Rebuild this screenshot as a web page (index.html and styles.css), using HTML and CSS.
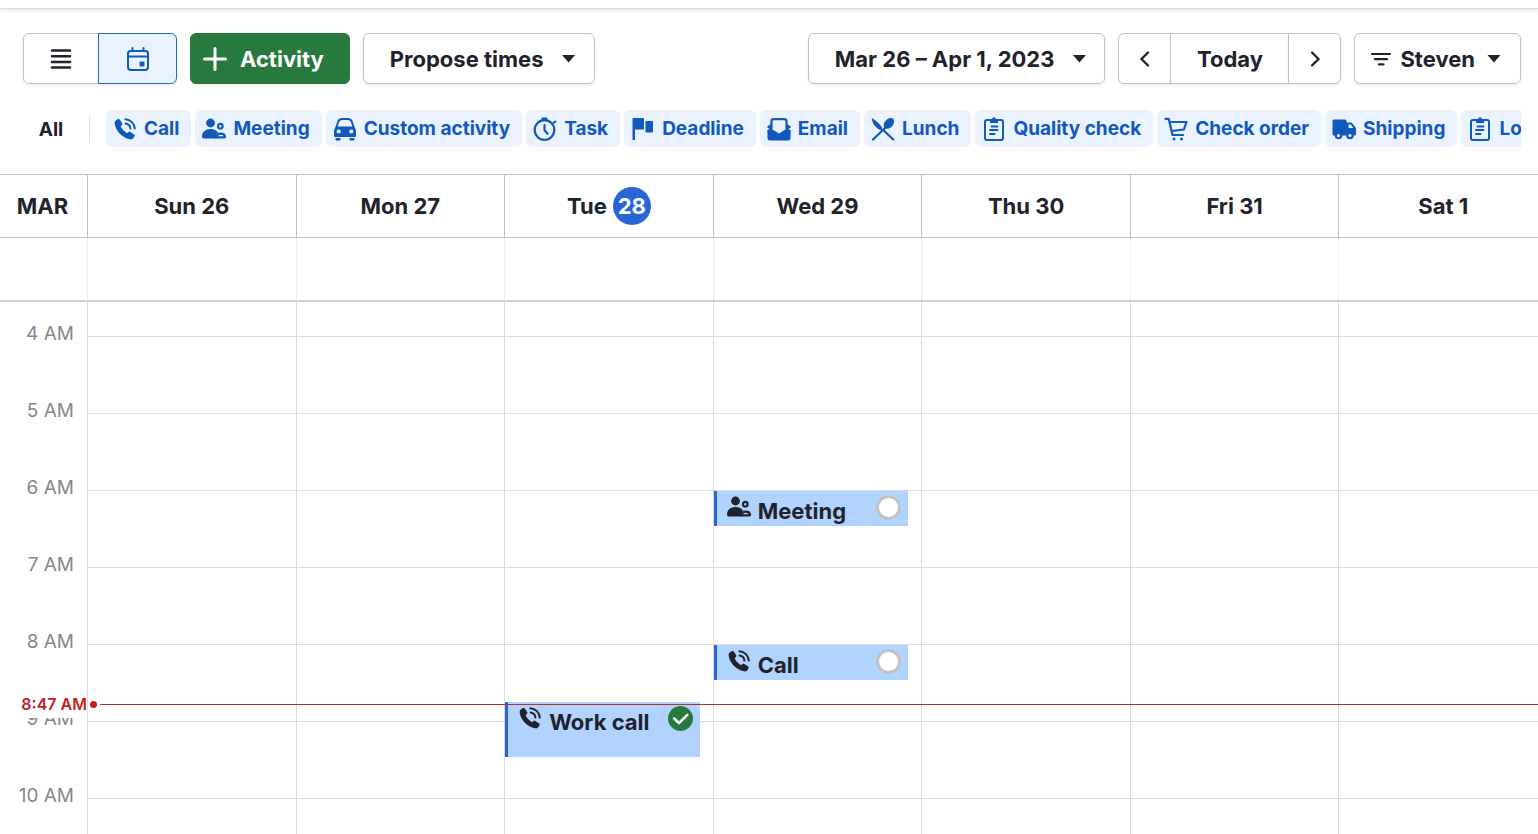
FILE: index.html
```html
<!DOCTYPE html>
<html lang="en">
<head>
<meta charset="utf-8">
<title>Activities</title>
<link rel="stylesheet" href="styles.css">
</head>
<body>
<svg class="sprite" aria-hidden="true">
  <symbol id="phone" viewBox="0 0 24 24">
    <path fill="currentColor" d="M3.4 3 5 2.1Q6.1 1.6 6.8 2.6L9.2 6.3Q9.7 7.3 8.9 8.1L7.6 9.4Q9.5 13.4 13.9 16.2L15.6 14.9Q16.5 14.3 17.4 14.9L21.2 17.4Q22 18 21.6 18.9L20.5 21Q19.4 22.7 17.3 22.3 10.5 21 5.9 15.7 1.9 11 1.6 6.1 1.6 4.1 3.4 3Z"/>
    <path fill="none" stroke="currentColor" stroke-width="2" stroke-linecap="round" d="M12.4 2.2a10 10 0 0 1 9.4 9.4M12.6 6.6a5.6 5.6 0 0 1 4.8 5"/>
  </symbol>
  <symbol id="people" viewBox="0 0 24 24">
    <circle cx="8.5" cy="6" r="4.4" fill="currentColor"/>
    <path fill="currentColor" d="M0 19.5C0 14.8 3.6 12 8.5 12c3.6 0 6.2 1.3 7.5 3.600-1.300 1.200-2 2.900-1.700 5.900H1.400Q0 21.500 0 19.500Z"/>
    <circle cx="18.300" cy="9.200" r="2.300" fill="none" stroke="currentColor" stroke-width="2.200"/>
    <path fill="none" stroke="currentColor" stroke-width="2.200" d="M13 20.400h9.400q.7 0 .6-.8c-.3-2-2-3-4.300-3-2.400 0-4 1.300-4.400 3.800"/>
  </symbol>
  <symbol id="car" viewBox="0 0 24 24">
    <path fill="none" stroke="currentColor" stroke-width="2" d="M3.200 11 5 5.200Q5.800 2.400 8.600 2.100q3.400-.3 6.800 0 2.800.3 3.600 3.100L20.800 11"/>
    <path fill="currentColor" fill-rule="evenodd" d="M4 9.500h16q3 1.500 3 4.700V19q0 1-1 1H2q-1 0-1-1v-4.800Q1 11 4 9.500ZM5.700 12.400a2.100 2.100 0 1 0 0 4.200 2.100 2.100 0 0 0 0-4.200ZM18.300 12.400a2.100 2.100 0 1 0 0 4.200 2.100 2.100 0 0 0 0-4.200ZM2.500 21h5v1.500q0 1-1 1h-3q-1 0-1-1ZM16.500 21h5v1.500q0 1-1 1h-3q-1 0-1-1Z"/>
  </symbol>
  <symbol id="timer" viewBox="0 0 24 24">
    <circle cx="11.500" cy="13" r="9.800" fill="none" stroke="currentColor" stroke-width="2.200"/>
    <path fill="none" stroke="currentColor" stroke-width="2.200" stroke-linecap="round" d="M11.500 8.200V13l3 3.800M20.800 5.600l1.500-1"/>
    <path fill="currentColor" d="M8.800.5h5.400l.6 3.500H8.200Z"/>
  </symbol>
  <symbol id="flag" viewBox="0 0 24 24">
    <path fill="currentColor" d="M1.500 2q0-1 1-1H12q1 0 1 1v10.500H4V23H1.500ZM14.500 4H21q1 0 1 1v9.500q0 1-1 1h-5.500q-1 0-1-1Z"/>
  </symbol>
  <symbol id="mail" viewBox="0 0 24 24">
    <path fill="none" stroke="currentColor" stroke-width="2.200" d="M4.500 12V4.200q0-2 2-2h11q2 0 2 2V12"/>
    <path fill="currentColor" d="M4.500 6.500.6 9.300q-.9.800 0 1.500l3.900 2.200ZM19.500 6.500l3.900 2.800q.9.800 0 1.500l-3.900 2.200ZM.5 13.400 12 18.700l11.500-5.300V21q0 2.500-2.500 2.500H3Q.5 23.500.5 21Z"/>
    <path fill="currentColor" d="M.5 13 4 11.500l8 5 8-5 3.500 1.500v2L12 20 .5 15Z"/>
  </symbol>
  <symbol id="lunch" viewBox="0 0 24 24">
    <path fill="none" stroke="currentColor" stroke-width="2.200" stroke-linecap="round" d="M2 22.500 15 10M22.200 22.500 13.300 14"/>
    <path fill="currentColor" d="M.8 1q3.500 2 8 6.500 2.800 2.600 2.700 5.700-2.300.4-5-1.700Q1 7 .8 1ZM13.300 11.500Q11.600 6.500 15 3.200q3.800-3.400 7.300-1.500 2 3.600-1.100 7.500-3.100 3.600-7.900 2.300Z"/>
  </symbol>
  <symbol id="clipboard" viewBox="0 0 24 24">
    <rect x="3" y="3" width="18" height="20" rx="2" fill="none" stroke="currentColor" stroke-width="2"/>
    <path fill="currentColor" d="M8 2h2q.5-1.800 2-1.800T14 2h2v4H8Z"/>
    <path stroke="currentColor" stroke-width="2" stroke-linecap="round" d="M9.500 9.500h6M8 13h7.500M8 17h4.500"/>
  </symbol>
  <symbol id="cart" viewBox="0 0 24 24">
    <path fill="none" stroke="currentColor" stroke-width="2.200" stroke-linecap="round" stroke-linejoin="round" d="M1.500 1.800h3.200L8.500 18H19M5.800 5H22.500l-2.600 7.500L7.500 14"/>
    <circle cx="10" cy="22" r="1.500" fill="currentColor"/><circle cx="17.500" cy="22" r="1.500" fill="currentColor"/>
  </symbol>
  <symbol id="truck" viewBox="0 0 24 24">
    <path fill="currentColor" fill-rule="evenodd" d="M2 2.500h11q1.500 0 1.500 1.500v1.500h4q1.200 0 2 1l2.700 3.500q.8 1 .8 2V17q0 1.500-1.500 1.500H2Q.5 18.500.5 17V4Q.5 2.500 2 2.500ZM16.500 7.500V11h4.800l-2.500-3.500Z"/>
    <circle cx="6.500" cy="18.500" r="2.700" fill="#eaf2fd" stroke="currentColor" stroke-width="2.200"/><circle cx="18" cy="18.500" r="2.700" fill="#eaf2fd" stroke="currentColor" stroke-width="2.200"/>
  </symbol>
</svg>

<div class="topbar"></div>

<header class="toolbar">
  <div class="group">
    <button class="btn toggle" aria-label="List view"><svg class="icon" viewBox="0 0 24 24"><path stroke="currentColor" stroke-width="2.500" stroke-linecap="round" d="M3 3.500h18M3 9.200h18M3 14.900h18M3 20.600h18"/></svg></button>
    <button class="btn toggle selected" aria-label="Calendar view" aria-pressed="true"><svg class="icon" viewBox="0 0 24 24"><path fill="none" stroke="currentColor" stroke-width="2" stroke-linecap="round" d="M4.500 4h15q2.500 0 2.500 2.500V20q0 3-3 3H5q-3 0-3-3V6.500Q2 4 4.500 4ZM2 9.500h20M6.500 1v3M17.500 1v3"/><rect x="13.500" y="14.500" width="5" height="5" rx="1" fill="currentColor"/></svg></button>
  </div>
  <button class="btn primary"><svg class="icon" viewBox="0 0 24 24"><path stroke="currentColor" stroke-width="3" stroke-linecap="round" d="M12 1.500v21M1.500 12h21"/></svg>Activity</button>
  <button class="btn menu">Propose times<span class="caret"></span></button>
  <div class="spacer"></div>
  <button class="btn menu">Mar 26 – Apr 1, 2023<span class="caret"></span></button>
  <div class="group">
    <button class="btn step" aria-label="Previous week"><svg class="icon" viewBox="0 0 24 24"><path fill="none" stroke="currentColor" stroke-width="2.300" stroke-linecap="round" d="M15 5.500 8.500 12l6.500 6.500"/></svg></button>
    <button class="btn today">Today</button>
    <button class="btn step" aria-label="Next week"><svg class="icon" viewBox="0 0 24 24"><path fill="none" stroke="currentColor" stroke-width="2.300" stroke-linecap="round" d="M9 5.500l6.500 6.500L9 18.500"/></svg></button>
  </div>
  <button class="btn user"><svg class="icon" viewBox="0 0 24 24"><path stroke="currentColor" stroke-width="2.200" stroke-linecap="round" d="M3 7h18M6 12.200h12M10 17.400h4.500"/></svg>Steven<span class="caret"></span></button>
</header>

<nav class="filters" aria-label="Activity types">
  <button class="all">All</button>
  <div class="chips">
    <button class="chip"><svg class="icon"><use href="#phone"/></svg>Call</button>
    <button class="chip"><svg class="icon"><use href="#people"/></svg>Meeting</button>
    <button class="chip"><svg class="icon"><use href="#car"/></svg>Custom activity</button>
    <button class="chip"><svg class="icon"><use href="#timer"/></svg>Task</button>
    <button class="chip"><svg class="icon"><use href="#flag"/></svg>Deadline</button>
    <button class="chip"><svg class="icon"><use href="#mail"/></svg>Email</button>
    <button class="chip"><svg class="icon"><use href="#lunch"/></svg>Lunch</button>
    <button class="chip"><svg class="icon"><use href="#clipboard"/></svg>Quality check</button>
    <button class="chip"><svg class="icon"><use href="#cart"/></svg>Check order</button>
    <button class="chip"><svg class="icon"><use href="#truck"/></svg>Shipping</button>
    <button class="chip"><svg class="icon"><use href="#clipboard"/></svg>Lo</button>
  </div>
</nav>

<main class="calendar">
  <div class="week days">
    <div class="month">MAR</div>
    <div class="day">Sun 26</div>
    <div class="day">Mon 27</div>
    <div class="day">Tue <span class="current">28</span></div>
    <div class="day">Wed 29</div>
    <div class="day">Thu 30</div>
    <div class="day">Fri 31</div>
    <div class="day">Sat 1</div>
  </div>
  <div class="week allday"><div></div><div></div><div></div><div></div><div></div><div></div><div></div><div></div></div>
  <div class="week hours">
    <div class="times">
      <div class="time">4 AM</div><div class="time">5 AM</div><div class="time">6 AM</div><div class="time">7 AM</div><div class="time">8 AM</div><div class="time">9 AM</div><div class="time">10 AM</div>
    </div>
    <div class="column"></div>
    <div class="column"></div>
    <div class="column">
      <article class="event work"><svg class="icon"><use href="#phone"/></svg><span class="title">Work call</span><input type="checkbox" class="done" aria-label="Work call done" checked><svg class="tick" viewBox="0 0 24 24"><path fill="none" stroke="#fff" stroke-width="2.500" stroke-linecap="round" stroke-linejoin="round" d="M6 12l4.500 4.500L18.500 8.500"/></svg></article>
    </div>
    <div class="column">
      <article class="event meeting"><svg class="icon"><use href="#people"/></svg><span class="title">Meeting</span><input type="checkbox" class="done" aria-label="Meeting done"></article>
      <article class="event call"><svg class="icon"><use href="#phone"/></svg><span class="title">Call</span><input type="checkbox" class="done" aria-label="Call done"></article>
    </div>
    <div class="column"></div>
    <div class="column"></div>
    <div class="column"></div>
    <div class="now"><span class="clock">8:47 AM</span><span class="dot"></span><span class="rule"></span></div>
  </div>
</main>
</body>
</html>
```
FILE: styles.css
```css
* { box-sizing: border-box; }

body {
  margin: 0;
  height: 100vh;
  display: flex;
  flex-direction: column;
  overflow: hidden;
  background: #fff;
  color: #21232c;
  font: 700 22px/28px Inter, "Liberation Sans", sans-serif;
}

button {
  font: inherit;
  color: inherit;
  white-space: nowrap;
  cursor: pointer;
}

.sprite { position: absolute; width: 0; height: 0; }
.icon { width: 24px; height: 24px; flex: none; }

.topbar {
  height: 9px;
  flex: none;
  border-bottom: 1px solid #dcdcdc;
  box-shadow: 0 1px 4px rgba(0, 0, 0, .12);
}

/* Toolbar */
.toolbar {
  display: flex;
  gap: 13px;
  padding: 24px 17px 0 23px;
}

.btn {
  height: 51px;
  display: flex;
  align-items: center;
  justify-content: center;
  padding: 0;
  border: 1px solid #c1c2c4;
  border-radius: 6px;
  background: #fff;
  box-shadow: 0 2px 3px rgba(0, 0, 0, .06);
}

.group { display: flex; }
.group .btn + .btn { margin-left: -1px; }
.group .btn:not(:first-child) { border-top-left-radius: 0; border-bottom-left-radius: 0; }
.group .btn:not(:last-child) { border-top-right-radius: 0; border-bottom-right-radius: 0; }

.toggle { width: 76px; }
.toggle.selected {
  width: 79px;
  border-color: #2a66c8;
  background: #eaf2fd;
  color: #1159bd;
}

.primary {
  padding: 0 25px 0 12px;
  gap: 13px;
  border-color: #28793d;
  background: #28793d;
  color: #fff;
}

.menu { padding: 0 18px 0 26px; gap: 18px; }
.spacer { flex: 1; }
.step { width: 53px; }
.today { width: 119px; }
.user { padding: 0 19px 0 14px; gap: 7px; }
.user .caret { margin-left: 5px; }

.caret {
  width: 14px;
  height: 8px;
  background: currentColor;
  clip-path: polygon(0 0, 100% 0, 50% 100%);
}

/* Activity type filters */
.filters {
  display: flex;
  align-items: center;
  padding: 26px 17px 27px 23px;
  font-size: 19px;
}

.all {
  height: 26px;
  width: 67px;
  flex: none;
  padding: 0 10px 2px 0;
  border: 0;
  border-right: 1px solid #dcdcdc;
  background: none;
}

.chips {
  display: flex;
  gap: 4px;
  flex: 1;
  min-width: 0;
  margin-left: 16px;
  overflow: hidden;
}

.chip {
  height: 37px;
  flex: none;
  display: flex;
  align-items: center;
  gap: 7px;
  padding: 0 12px 0 7px;
  border: 0;
  border-radius: 6px;
  background: #eaf2fd;
  color: #1159bd;
}

/* Calendar */
.calendar {
  flex: 1;
  min-height: 0;
  display: flex;
  flex-direction: column;
  overflow: hidden;
}

/* The last day runs under the edge of the window */
.week {
  width: calc(100% + 9px);
  display: grid;
  grid-template-columns: 87px repeat(7, 1fr);
}

.days {
  height: 64px;
  flex: none;
  border: solid #c1c2c4;
  border-width: 1px 0;
}

.month, .day {
  display: flex;
  align-items: center;
  justify-content: center;
  gap: 6px;
}

.month { padding-right: 2px; }
.day { border-left: 1px solid #c1c2c4; }

.current {
  width: 38px;
  height: 38px;
  display: grid;
  place-items: center;
  border-radius: 50%;
  background: #2766d4;
  color: #fff;
}

.allday {
  height: 64px;
  flex: none;
  border-bottom: 2px solid #d0d0d0;
}

.allday > div + div { border-left: 1px solid #ececec; }

.hours {
  flex: 1;
  position: relative;
  background: repeating-linear-gradient(#fff 0 76px, #dcdcdc 76px 77px) 87px -42px;
  background-repeat: no-repeat;
  background-size: 100% 200%;
}

.times {
  display: flex;
  flex-direction: column;
  padding: 20px 13px 0 0;
  color: #86878c;
  font-size: 19px;
  font-weight: 400;
  line-height: 24px;
  text-align: right;
}

.time { height: 77px; flex: none; }

.column {
  position: relative;
  border-left: 1px solid #dadada;
}

.event {
  position: absolute;
  left: 0;
  right: 13px;
  display: flex;
  align-items: flex-start;
  gap: 7px;
  padding: 4px 7px 0 10px;
  border-left: 3px solid #2766d4;
  background: #b1d3ff;
}

.title { flex: 1; padding-top: 2px; }
.event.meeting { top: 189px; height: 35px; }
.event.call { top: 343px; height: 35px; }
.event.work { top: 400px; height: 55px; }

.done {
  appearance: none;
  width: 25px;
  height: 25px;
  flex: none;
  margin: 0;
  border: 3px solid #c1c2c4;
  border-radius: 50%;
  background: #fff;
}

.done:checked { border-color: #28793d; background: #28793d; }

.tick {
  position: absolute;
  top: 4px;
  right: 7px;
  width: 25px;
  height: 25px;
  pointer-events: none;
}

.now {
  position: absolute;
  top: 389px;
  left: 0;
  right: 0;
  height: 27px;
  display: flex;
  align-items: center;
  color: #c11f1f;
  font-size: 16px;
  font-weight: 600;
  pointer-events: none;
}

.clock {
  width: 87px;
  background: #fff;
  line-height: 27px;
  text-align: right;
}

.dot {
  width: 7px;
  height: 7px;
  margin: 0 3px;
  border-radius: 50%;
  background: currentColor;
}

.rule { flex: 1; height: 1px; background: #ab3434; }
```
